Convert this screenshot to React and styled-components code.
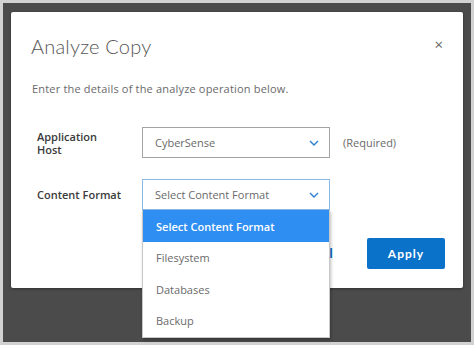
import React, { useState } from 'react'
import styled, { createGlobalStyle } from 'styled-components'

const Global = createGlobalStyle`
    html, body {
        margin: 0;
        padding: 0;
        background: #4b4b4b;
    }
    * { box-sizing: border-box; }
`

const Frame = styled.div`
    width: 474px;
    height: 345px;
    border: 3px solid #d2d2d2;
    background: #4b4b4b;
    padding: 9px 0 0 8px;
    font-family: "Open Sans", Lato, sans-serif;
`

const Modal = styled.div`
    position: relative;
    width: 452px;
    height: 276px;
    background: #fff;
    border-radius: 2px;
    box-shadow: 0 1px 3px rgba(0, 0, 0, 0.35);
    padding: 22px 18px 0 20px;
    display: flex;
    flex-direction: column;
`

const Header = styled.div`
    display: flex;
    justify-content: space-between;
    align-items: flex-start;
`

const Title = styled.h1`
    margin: 0;
    font-family: Lato, sans-serif;
    font-size: 20px;
    font-weight: 300;
    color: #565656;
    line-height: 24px;
    letter-spacing: 0.2px;
`

const Close = styled.button`
    border: 0;
    background: none;
    padding: 0;
    margin: 3px 2px 0 0;
    color: #666;
    font-size: 15px;
    line-height: 14px;
    cursor: pointer;
    font-family: inherit;
`

const Intro = styled.p`
    margin: 23px 0 0 1px;
    font-size: 11px;
    color: #6a6a6a;
    letter-spacing: 0.18px;
`

const Form = styled.div`
    margin: 31px 0 0 6px;
    display: flex;
    flex-direction: column;
    gap: 21px;
`

const Row = styled.div`
    display: flex;
    align-items: center;
`

const Label = styled.label`
    width: 105px;
    font-size: 11px;
    font-weight: 600;
    color: #3a3a3a;
    line-height: 13px;
`

const SelectWrap = styled.div`
    position: relative;
`

const Select = styled.div`
    width: 188px;
    height: 31px;
    border: 1px solid ${p => (p.$open ? '#8ab8e4' : '#a3a3a3')};
    background: #fff;
    display: flex;
    align-items: center;
    justify-content: space-between;
    padding: 0 10px 0 12px;
    font-size: 11px;
    color: #6a6a6a;
    cursor: pointer;
`

const Hint = styled.span`
    margin-left: 13px;
    font-size: 11px;
    color: #6a6a6a;
`

const Menu = styled.ul`
    position: absolute;
    z-index: 10;
    top: 31px;
    left: 0;
    width: 188px;
    margin: 0;
    padding: 0;
    list-style: none;
    background: #fff;
    border: 1px solid #c8c8c8;
    border-top: 0;
    box-shadow: 1px 2px 3px rgba(0, 0, 0, 0.25);
`

const Option = styled.li`
    height: ${p => (p.$first ? '32px' : '31.5px')};
    display: flex;
    align-items: center;
    padding-left: 13px;
    font-size: 11px;
    color: ${p => (p.$active ? '#fff' : '#6a6a6a')};
    background: ${p => (p.$active ? '#2f8ef1' : '#fff')};
    font-weight: ${p => (p.$active ? 600 : 400)};
`

const Footer = styled.div`
    margin-top: auto;
    margin-bottom: 19px;
    display: flex;
    justify-content: flex-end;
    align-items: center;
    gap: 32px;
`

const LinkButton = styled.button`
    border: 0;
    background: none;
    color: #0b72c9;
    font-family: inherit;
    font-size: 12px;
    font-weight: 700;
    padding: 0;
    width: 44px;
`

const Apply = styled.button`
    width: 78px;
    height: 31px;
    border: 0;
    border-radius: 2px;
    background: #0b72c9;
    color: #fff;
    font-family: Lato, sans-serif;
    font-size: 12px;
    font-weight: 700;
    letter-spacing: 1px;
    cursor: pointer;
`

const Chevron = () => (
    <svg width="10" height="6" viewBox="0 0 10 6" fill="none">
        <path d="M1 1l4 4 4-4" stroke="#2c7fd2" strokeWidth="1.4" />
    </svg>
)

const formats = ['Select Content Format', 'Filesystem', 'Databases', 'Backup']

const App = () => {
    const [open, setOpen] = useState(true)

    return (
        <Frame>
            <Global />
            <Modal>
                <Header>
                    <Title>Analyze Copy</Title>
                    <Close>×</Close>
                </Header>
                <Intro>Enter the details of the analyze operation below.</Intro>
                <Form>
                    <Row>
                        <Label>Application<br />Host</Label>
                        <Select>
                            CyberSense
                            <Chevron />
                        </Select>
                        <Hint>(Required)</Hint>
                    </Row>
                    <Row>
                        <Label>Content Format</Label>
                        <SelectWrap>
                            <Select $open={open} onClick={() => setOpen(!open)}>
                                Select Content Format
                                <Chevron />
                            </Select>
                            {open && (
                                <Menu>
                                    {formats.map((f, i) => (
                                        <Option key={f} $active={i === 0} $first={i === 0}>{f}</Option>
                                    ))}
                                </Menu>
                            )}
                        </SelectWrap>
                    </Row>
                </Form>
                <Footer>
                    <LinkButton>Cancel</LinkButton>
                    <Apply>Apply</Apply>
                </Footer>
            </Modal>
        </Frame>
    )
}

export default App
